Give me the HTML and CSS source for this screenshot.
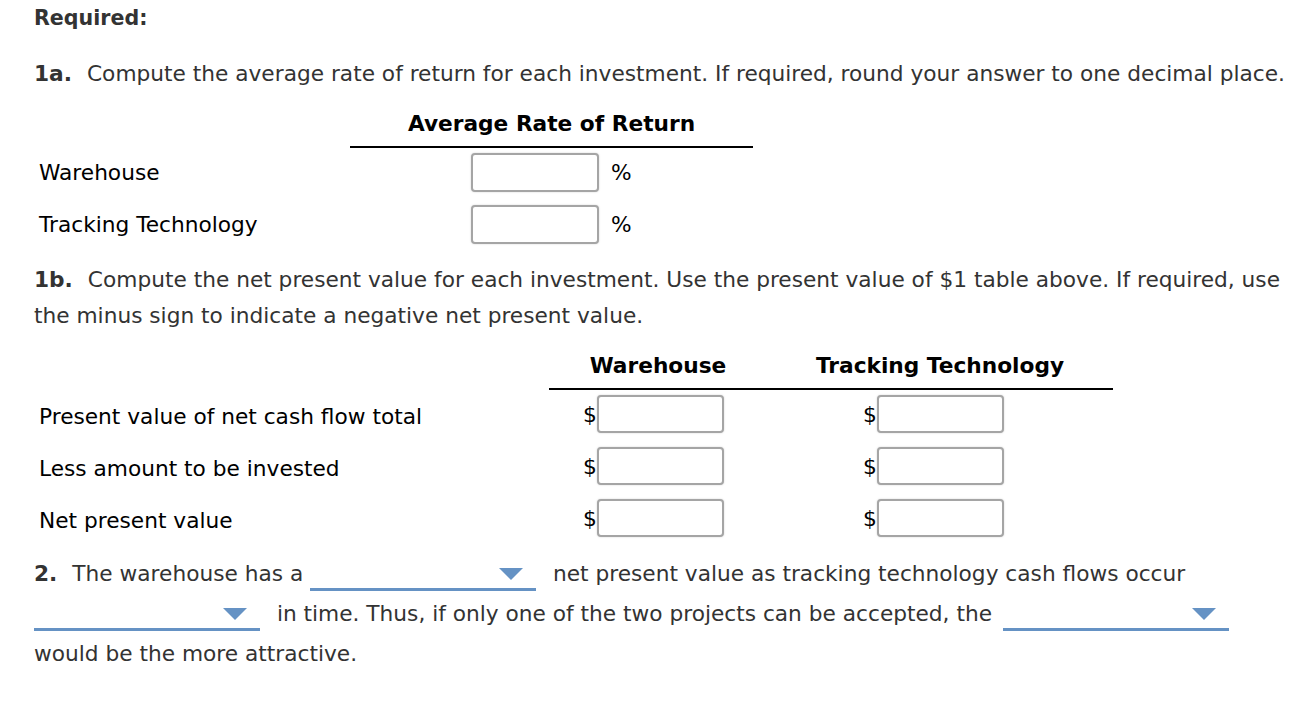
FILE: index.html
```html
<!DOCTYPE html>
<html>
<head>
<meta charset="utf-8">
<link rel="stylesheet" href="styles.css">
</head>
<body>
<div class="page">
  <div class="required">Required:</div>
  <p class="q q1a"><b class="num">1a.</b>Compute the average rate of return for each investment. If required, round your answer to one decimal place.</p>

  <div class="t1">
    <div class="t1-label t-blank"></div>
    <div class="t1-head">Average Rate of Return</div>
    <div class="t1-label">Warehouse</div>
    <div class="t1-cell"><span class="box"></span><span class="pct">%</span></div>
    <div class="t1-label">Tracking Technology</div>
    <div class="t1-cell"><span class="box"></span><span class="pct">%</span></div>
  </div>

  <p class="q q1b"><b class="num">1b.</b>Compute the net present value for each investment. Use the present value of $1 table above. If required, use the minus sign to indicate a negative net present value.</p>

  <div class="t2">
    <div class="t2-label t-blank"></div>
    <div class="t2-head">Warehouse</div>
    <div class="t2-head">Tracking Technology</div>
    <div class="t2-label">Present value of net cash flow total</div>
    <div class="t2-cell c1"><span class="dol">$</span><span class="box b2"></span></div>
    <div class="t2-cell c2"><span class="dol">$</span><span class="box b2"></span></div>
    <div class="t2-label">Less amount to be invested</div>
    <div class="t2-cell c1"><span class="dol">$</span><span class="box b2"></span></div>
    <div class="t2-cell c2"><span class="dol">$</span><span class="box b2"></span></div>
    <div class="t2-label">Net present value</div>
    <div class="t2-cell c1"><span class="dol">$</span><span class="box b2"></span></div>
    <div class="t2-cell c2"><span class="dol">$</span><span class="box b2"></span></div>
  </div>

  <p class="q2"><b class="num">2.</b>The warehouse has a <span class="dd"></span> net present value as tracking technology cash flows occur <span class="dd"></span> in time. Thus, if only one of the two projects can be accepted, the <span class="dd dd-last"></span> would be the more attractive.</p>
</div>
</body>
</html>
```
FILE: styles.css
```css
html, body {
  margin: 0;
  padding: 0;
  background: #fff;
}
.page {
  font-family: "DejaVu Sans", Verdana, sans-serif;
  font-size: 21.7px;
  color: #333;
  padding-left: 34px;
  width: 1262px;
}
.required {
  font-weight: bold;
  font-size: 20.6px;
  line-height: 24px;
  padding-top: 6px;
  color: #333;
}
.num {
  margin-right: 15px;
}
.q {
  line-height: 36px;
  margin: 0;
}
.q1a { margin-top: 26px; }

/* table 1 */
.t1 {
  display: grid;
  grid-template-columns: 316px 403px;
  color: #000;
}
.t1-head, .t2-head {
  font-weight: bold;
  text-align: center;
  border-bottom: 2px solid #000;
  padding: 20px 0 10px;
  line-height: 24px;
}
.t1-label, .t2-label {
  padding-left: 5px;
  display: flex;
  align-items: center;
  height: 52px;
  box-sizing: border-box;
}
.t1-label.t-blank, .t2-label.t-blank { height: auto; }
.t1 .t1-label { padding-bottom: 4px; }
.t1-cell {
  display: flex;
  align-items: center;
  gap: 12px;
  padding: 0 0 4px 121px;
  height: 52px;
  box-sizing: border-box;
}
.box {
  display: inline-block;
  box-sizing: border-box;
  flex: none;
  width: 128px;
  height: 39px;
  border: 2px solid #a5a5a5;
  border-radius: 4px;
  background: #fff;
  box-shadow: 0 0 2px rgba(0, 0, 0, 0.18);
}

.q1b { margin-top: 10px; }

/* table 2 */
.t2 {
  display: grid;
  grid-template-columns: 515px 218px 346px;
  color: #000;
}
.t2-cell {
  display: flex;
  align-items: center;
  height: 52px;
  padding-bottom: 4px;
  box-sizing: border-box;
}
.t2-cell.c1 { padding-left: 34px; }
.t2-cell.c2 { padding-left: 96px; }
.dol { width: 14px; flex: none; }
.b2 { width: 127px; height: 38px; }

/* part 2 */
.q2 {
  line-height: 40px;
  margin: 8px 0 0;
  color: #333;
}
.dd {
  display: inline-block;
  position: relative;
  width: 226px;
  height: 22px;
  border-bottom: 3px solid #6592c4;
  vertical-align: -10px;
  margin-right: 10px;
}
.dd-last { margin-left: 4px; }
.dd::after {
  content: "";
  position: absolute;
  right: 13px;
  top: 2px;
  border-left: 12px solid transparent;
  border-right: 12px solid transparent;
  border-top: 12px solid #6592c4;
}
```
